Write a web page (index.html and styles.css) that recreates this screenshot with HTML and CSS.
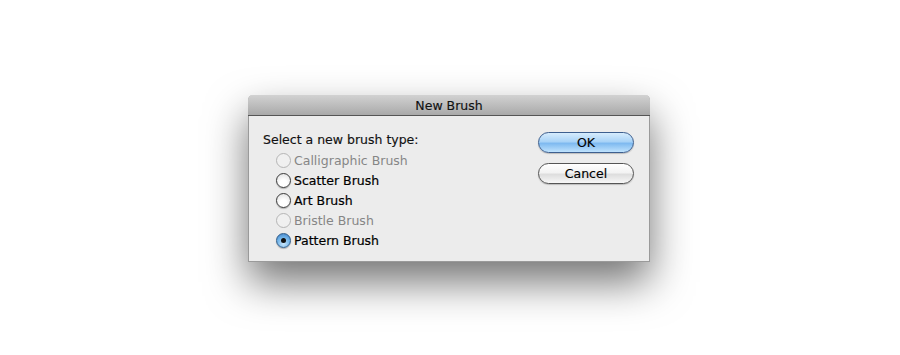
FILE: index.html
```html
<!DOCTYPE html>
<html>
<head>
<meta charset="utf-8">
<link rel="stylesheet" href="styles.css">
</head>
<body>
<div class="stage">
  <div class="dialog">
    <div class="titlebar">New Brush</div>
    <div class="content">
      <div class="options">
        <div class="prompt">Select a new brush type:</div>
        <div class="radio disabled"><span class="dot"></span><span>Calligraphic Brush</span></div>
        <div class="radio"><span class="dot"></span><span>Scatter Brush</span></div>
        <div class="radio"><span class="dot"></span><span>Art Brush</span></div>
        <div class="radio disabled"><span class="dot"></span><span>Bristle Brush</span></div>
        <div class="radio checked"><span class="dot"></span><span>Pattern Brush</span></div>
      </div>
      <div class="buttons">
        <button class="btn default">OK</button>
        <button class="btn">Cancel</button>
      </div>
    </div>
  </div>
</div>
</body>
</html>
```
FILE: styles.css
```css
html, body {
  margin: 0;
  padding: 0;
  background: #ffffff;
}
body {
  width: 900px;
  height: 355px;
  overflow: hidden;
  font-family: "DejaVu Sans", "Liberation Sans", sans-serif;
}
.stage {
  padding-top: 95px;
  padding-left: 248px;
}
.dialog {
  width: 402px;
  height: 167px;
  box-sizing: border-box;
  background: #ececec;
  border: 1px solid #9a9a9a;
  border-top: none;
  border-radius: 5px 5px 0 0;
  box-shadow: 0 20px 42px rgba(0,0,0,0.55);
  display: flex;
  flex-direction: column;
}
.titlebar {
  height: 20px;
  border-bottom: 1px solid #555;
  border-radius: 5px 5px 0 0;
  background: linear-gradient(#d2d2d2, #a9a9a9);
  text-align: center;
  font-size: 12.5px;
  line-height: 21px;
  color: #111;
  margin: 0 -1px;
  -webkit-text-stroke: 0.15px #111;
}
.content {
  display: flex;
  justify-content: space-between;
  padding: 16px 15px 0 14px;
}
.prompt {
  font-size: 12.5px;
  line-height: 16px;
  color: #111;
  margin-bottom: 2px;
  -webkit-text-stroke: 0.15px #111;
}
.radio {
  display: flex;
  align-items: center;
  height: 20px;
  padding-left: 13px;
  font-size: 12.5px;
  color: #000;
  -webkit-text-stroke: 0.2px #000;
}
.radio.disabled { color: #868686; -webkit-text-stroke: 0; }
.dot {
  width: 13px;
  height: 13px;
  border-radius: 50%;
  border: 1px solid #3a3a3a;
  background: radial-gradient(circle at 50% 70%, #ffffff 30%, #dcdcdc 100%);
  box-shadow: 0 1px 1px rgba(0,0,0,0.25);
  margin-right: 3px;
  position: relative;
  flex: none;
}
.radio.disabled .dot {
  border-color: #b5b5b5;
  box-shadow: none;
  background: #f0f0f0;
}
.radio.checked .dot {
  border-color: #2e5c8a;
  background: radial-gradient(circle at 50% 75%, #c9e6fb 0%, #6fb2e8 55%, #3b7cc4 100%);
}
.radio.checked .dot::after {
  content: "";
  position: absolute;
  left: 4px;
  top: 4px;
  width: 5px;
  height: 5px;
  border-radius: 50%;
  background: #111;
}
.buttons {
  display: flex;
  flex-direction: column;
  gap: 10px;
}
.btn {
  width: 96px;
  height: 21px;
  border-radius: 11px;
  border: 1px solid #555;
  background: linear-gradient(#ffffff 0%, #f3f3f3 45%, #dedede 55%, #f7f7f7 100%);
  font-family: "DejaVu Sans", "Liberation Sans", sans-serif;
  font-size: 12.5px;
  color: #000;
  padding: 0;
  line-height: 19px;
  box-shadow: 0 1px 1px rgba(0,0,0,0.2);
  -webkit-text-stroke: 0.15px #000;
}
.btn.default {
  border-color: #3d5f8f;
  background: linear-gradient(#d6ecfd 0%, #a9d3f7 45%, #7fbaf0 55%, #bfe2fd 100%);
}
```
